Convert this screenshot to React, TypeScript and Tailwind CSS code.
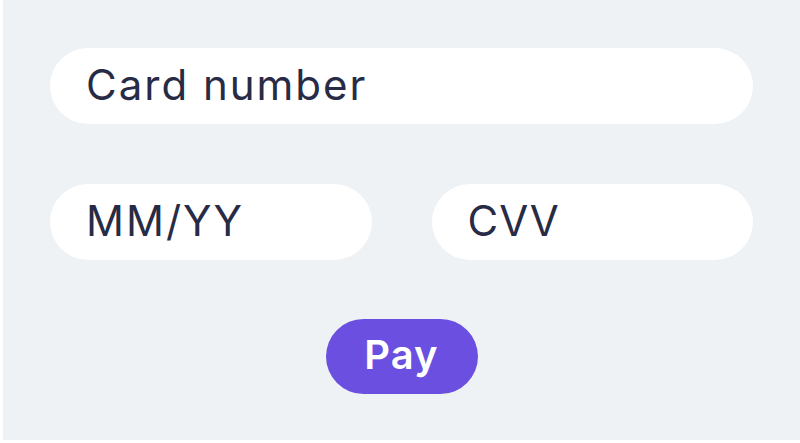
export default function App() {
  return (
    <div
      className="flex h-[443px] w-[800px] bg-white"
      style={{ fontFamily: "Inter, 'Open Sans', sans-serif" }}
    >
      <div className="ml-[3px] mb-[3px] flex flex-1 flex-col bg-[#eef2f5] px-[47px] pt-[48px]">
        <div className="flex h-[76px] items-center rounded-full bg-white px-[36px] pb-[4px]">
          <span className="text-[42px] tracking-[2px] text-[#272b45]">Card number</span>
        </div>
        <div className="mt-[60px] grid grid-cols-2 gap-[60px]">
          <div className="flex h-[76px] items-center rounded-full bg-white px-[36px] pb-[4px]">
            <span className="text-[42px] tracking-[2px] text-[#272b45]">MM/YY</span>
          </div>
          <div className="flex h-[76px] items-center rounded-full bg-white px-[36px] pb-[4px]">
            <span className="text-[42px] tracking-[1px] text-[#272b45]">CVV</span>
          </div>
        </div>
        <div className="mt-[59px] flex justify-center">
          <button className="flex h-[75px] w-[152px] items-center justify-center rounded-full bg-[#6a4fe0] pb-[3px] text-[40px] font-semibold tracking-[1px] text-white">
            Pay
          </button>
        </div>
      </div>
    </div>
  );
}
